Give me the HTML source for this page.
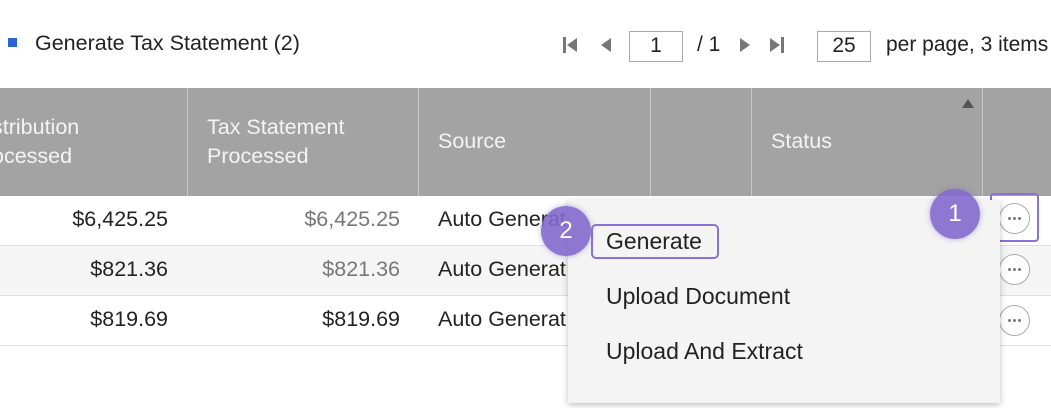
<!DOCTYPE html>
<html><head><style>
body{margin:0;width:1051px;height:408px;overflow:hidden;background:#fff;font-family:"Liberation Sans",sans-serif;position:relative;color:#222}
.a{position:absolute}
.h{color:#f4f4f4;font-size:21.5px;line-height:29px}
.vl{position:absolute;top:88px;width:1px;height:108px;background:#c8c8c8}
.cell{position:absolute;font-size:21.5px;line-height:24px}
.ell{position:absolute;left:999px;width:29px;height:29px;border:1.5px solid #aaa;border-radius:50%;background:#fff}
.ell::after{content:"";position:absolute;left:8px;top:13px;width:3px;height:3px;border-radius:50%;background:#777;box-shadow:5px 0 0 #777,10px 0 0 #777}
.badge{position:absolute;width:50px;height:50px;border-radius:50%;background:rgba(130,105,205,.9);color:#fff;font-size:24px;text-align:center;line-height:50px;box-shadow:0 0 6px rgba(120,100,200,.5)}
.box{position:absolute;border:1.5px solid #aaa;background:#fff;text-align:center;font-size:21px;line-height:27px}
.m{font-size:23px}
</style></head><body>
<div class="a" style="left:8px;top:38px;width:9px;height:9px;background:#2d62d4"></div>
<div class="a" style="left:35px;top:30px;font-size:21.5px;line-height:26px">Generate Tax Statement (2)</div>

<div class="a" style="left:563px;top:37px;width:3px;height:16px;background:#777"></div>
<div class="a" style="left:567px;top:38px;width:0;height:0;border-top:7px solid transparent;border-bottom:7px solid transparent;border-right:10px solid #777"></div>
<div class="a" style="left:601px;top:38px;width:0;height:0;border-top:7px solid transparent;border-bottom:7px solid transparent;border-right:10px solid #777"></div>
<div class="box" style="left:629px;top:31px;width:52px;height:29px">1</div>
<div class="a" style="left:697px;top:32px;font-size:21px;line-height:26px">/ 1</div>
<div class="a" style="left:740px;top:38px;width:0;height:0;border-top:7px solid transparent;border-bottom:7px solid transparent;border-left:10px solid #777"></div>
<div class="a" style="left:770px;top:38px;width:0;height:0;border-top:7px solid transparent;border-bottom:7px solid transparent;border-left:10px solid #777"></div>
<div class="a" style="left:781px;top:37px;width:3px;height:16px;background:#777"></div>
<div class="box" style="left:817px;top:31px;width:52px;height:29px">25</div>
<div class="a" style="left:886px;top:32px;font-size:21px;line-height:26px">per page, 3 items</div>

<div class="a" style="left:0;top:88px;width:1051px;height:108px;background:#a3a3a3"></div>
<div class="vl" style="left:187px"></div><div class="vl" style="left:418px"></div><div class="vl" style="left:650px"></div><div class="vl" style="left:751px"></div><div class="vl" style="left:982px"></div>
<div class="a h" style="left:-8px;top:113px">stribution<br>ocessed</div>
<div class="a h" style="left:207px;top:113px">Tax Statement<br>Processed</div>
<div class="a h" style="left:438px;top:127px">Source</div>
<div class="a h" style="left:771px;top:127px">Status</div>
<div class="a" style="left:962px;top:99px;width:0;height:0;border-left:6px solid transparent;border-right:6px solid transparent;border-bottom:9px solid #555"></div>

<div class="a" style="left:0;top:196px;width:1051px;height:49px;background:#fff;border-bottom:1px solid #e0e0e0"></div>
<div class="a" style="left:0;top:246px;width:1051px;height:49px;background:#f5f5f5;border-bottom:1px solid #e0e0e0"></div>
<div class="a" style="left:0;top:296px;width:1051px;height:49px;background:#fff;border-bottom:1px solid #e0e0e0"></div>

<div class="cell" style="right:883px;top:207px">$6,425.25</div>
<div class="cell" style="right:651px;top:207px;color:#777">$6,425.25</div>
<div class="cell" style="left:438px;top:207px">Auto Generat</div>
<div class="cell" style="right:883px;top:257px">$821.36</div>
<div class="cell" style="right:651px;top:257px;color:#777">$821.36</div>
<div class="cell" style="left:438px;top:257px">Auto Generat</div>
<div class="cell" style="right:883px;top:307px">$819.69</div>
<div class="cell" style="right:651px;top:307px">$819.69</div>
<div class="cell" style="left:438px;top:307px">Auto Generat</div>

<div class="ell" style="top:203px"></div>
<div class="ell" style="top:254px"></div>
<div class="ell" style="top:305px"></div>
<div class="a" style="left:990px;top:193px;width:45px;height:45px;border:2px solid #8a70d8;border-radius:4px"></div>

<div class="a" style="left:568px;top:200px;width:432px;height:203px;background:#f4f4f4;box-shadow:0 2px 6px rgba(0,0,0,.25)"></div>
<div class="a" style="left:591px;top:224px;width:124px;height:31px;border:2px solid #8a70d8;border-radius:5px"></div>
<div class="cell m" style="left:606px;top:229px">Generate</div>
<div class="cell m" style="left:606px;top:284px">Upload Document</div>
<div class="cell m" style="left:606px;top:339px">Upload And Extract</div>

<div class="badge" style="left:930px;top:189px">1</div>
<div class="badge" style="left:541px;top:206px">2</div>
</body></html>
